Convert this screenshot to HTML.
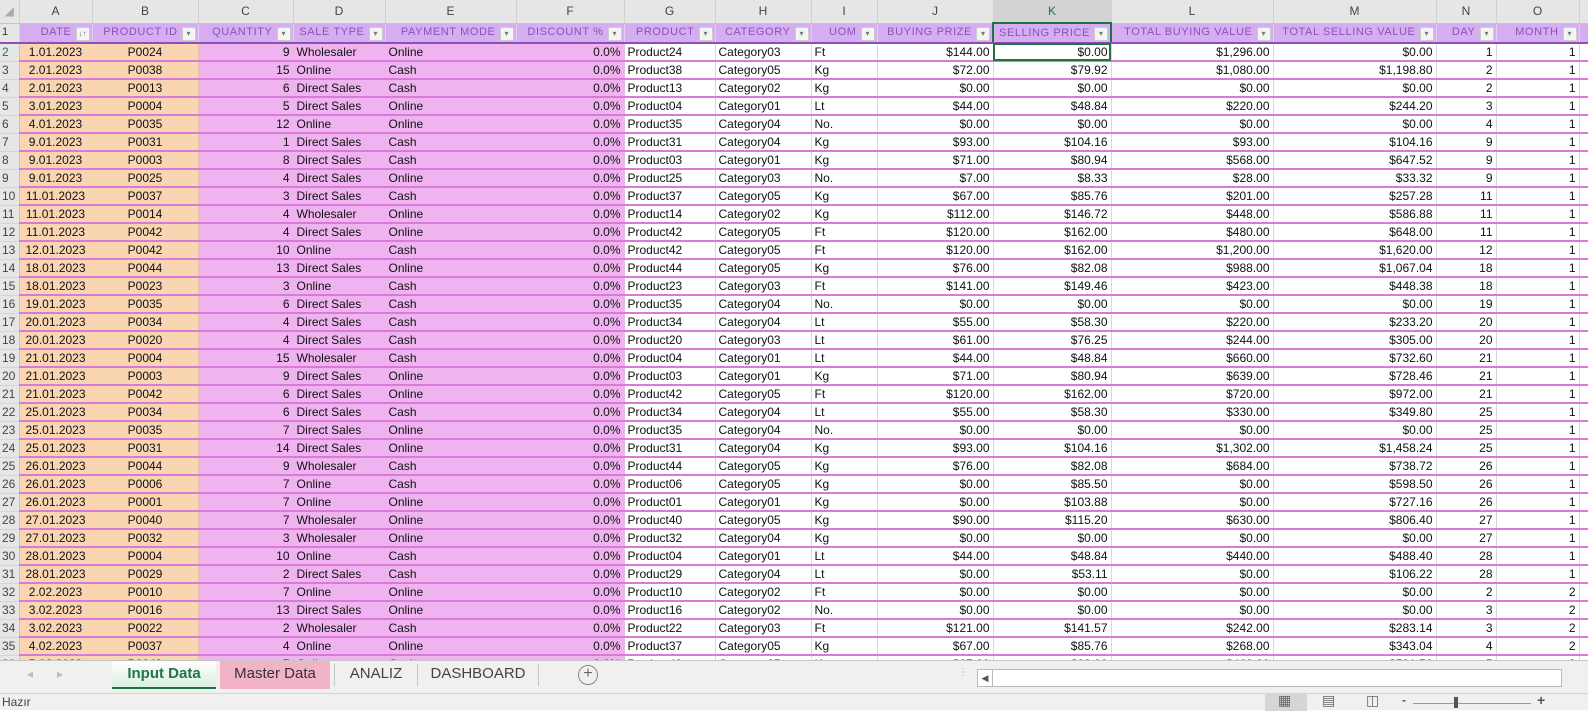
<!DOCTYPE html>
<html><head><meta charset="utf-8"><style>
*{margin:0;padding:0;box-sizing:border-box}
body{width:1588px;height:710px;overflow:hidden;background:#fff;font-family:"Liberation Sans",sans-serif;font-size:12px;color:#111;position:relative}
#wrap{position:absolute;left:0;top:0;width:1800px;height:660px;overflow:hidden}
table{border-collapse:collapse;table-layout:fixed;width:1680px;min-width:1680px}
td{white-space:nowrap;overflow:hidden;padding:0 3px;height:18px;line-height:15px;border-bottom:2px solid #d97ad9;border-right:1px solid #d8d8d8}
tr.ch td{height:23px;background:#e6e6e6;color:#444;text-align:center;border-bottom:1px solid #c6c6c6;border-right:1px solid #cfcfcf;font-size:12px}
tr.ch td.sel{background:#d3d3d3;color:#217346;border-bottom:2px solid #217346}
tr.h td{height:20px;background:#d5aef0;color:#8d4ec2;text-align:right;border-bottom:2px solid #8e4dba;border-right:1px solid #e4cdf5;font-size:11px;letter-spacing:.6px;position:relative;padding-right:20px}
tr.h td.rh{color:#333;letter-spacing:0}
.fb{position:absolute;right:2px;top:3px;width:14px;height:14px;background:#f4f4f4;border:1px solid #ccc;color:#777;font-size:8px;line-height:12px;text-align:center;letter-spacing:0}
td.rh{background:#e6e6e6!important;color:#444;text-align:left;padding:0 2px;border-right:1px solid #c6c6c6;border-bottom:1px solid #d4d4d4;font-size:12px}
tr.d td:nth-child(2),tr.d td:nth-child(3){background:#f9d5b1;text-align:center;border-right-color:#f9d5b1}
tr.d td:nth-child(3){border-right-color:#e8c0a0}
tr.d td:nth-child(4),tr.d td:nth-child(5),tr.d td:nth-child(6),tr.d td:nth-child(7){background:#efb3ef;border-right-color:#efb3ef}
tr.d td:nth-child(4),tr.d td:nth-child(7){text-align:right}
tr.d td:nth-child(n+11){text-align:right}
tr.d td:nth-child(7){border-right-color:#e0c0e0}
.cur{outline:2px solid #217346;outline-offset:-2px}
#tabs{position:absolute;left:0;top:660px;width:1588px;height:33px;background:#f0f0f0;border-top:1px solid #c6c6c6;font-size:15px;color:#444}
#tabs div{position:absolute;top:0;height:28px;line-height:26px;text-align:center}
#status{position:absolute;left:0;top:693px;width:1588px;height:17px;background:#f0f0f0;border-top:1px solid #d4d4d4;font-size:12px;color:#444}
</style></head><body>
<div id="wrap">
<table>
<colgroup><col style="width:19px"><col style="width:73px"><col style="width:106px"><col style="width:95px"><col style="width:92px"><col style="width:131px"><col style="width:108px"><col style="width:91px"><col style="width:96px"><col style="width:66px"><col style="width:116px"><col style="width:118px"><col style="width:162px"><col style="width:163px"><col style="width:60px"><col style="width:83px"><col style="width:101px"></colgroup>
<tr class="ch"><td class="rh" style="color:#aaa">◢</td><td>A</td><td>B</td><td>C</td><td>D</td><td>E</td><td>F</td><td>G</td><td>H</td><td>I</td><td>J</td><td class="sel">K</td><td>L</td><td>M</td><td>N</td><td>O</td><td></td></tr>
<tr class="h"><td class="rh">1</td><td>DATE<span class="fb">↓↑</span></td><td>PRODUCT ID<span class="fb">▾</span></td><td>QUANTITY<span class="fb">▾</span></td><td>SALE TYPE<span class="fb">▾</span></td><td>PAYMENT MODE<span class="fb">▾</span></td><td>DISCOUNT %<span class="fb">▾</span></td><td>PRODUCT<span class="fb">▾</span></td><td>CATEGORY<span class="fb">▾</span></td><td>UOM<span class="fb">▾</span></td><td>BUYING PRIZE<span class="fb">▾</span></td><td style="border:2px solid #217346;border-bottom:2px solid #8e4dba">SELLING PRICE<span class="fb">▾</span></td><td>TOTAL BUYING VALUE<span class="fb">▾</span></td><td>TOTAL SELLING VALUE<span class="fb">▾</span></td><td>DAY<span class="fb">▾</span></td><td>MONTH<span class="fb">▾</span></td><td></td></tr>
<tr class="d"><td class="rh" style="color:#217346">2</td><td>1.01.2023</td><td>P0024</td><td>9</td><td>Wholesaler</td><td>Online</td><td>0.0%</td><td>Product24</td><td>Category03</td><td>Ft</td><td>$144.00</td><td class="cur">$0.00</td><td>$1,296.00</td><td>$0.00</td><td>1</td><td>1</td><td></td></tr>
<tr class="d"><td class="rh">3</td><td>2.01.2023</td><td>P0038</td><td>15</td><td>Online</td><td>Cash</td><td>0.0%</td><td>Product38</td><td>Category05</td><td>Kg</td><td>$72.00</td><td>$79.92</td><td>$1,080.00</td><td>$1,198.80</td><td>2</td><td>1</td><td></td></tr>
<tr class="d"><td class="rh">4</td><td>2.01.2023</td><td>P0013</td><td>6</td><td>Direct Sales</td><td>Cash</td><td>0.0%</td><td>Product13</td><td>Category02</td><td>Kg</td><td>$0.00</td><td>$0.00</td><td>$0.00</td><td>$0.00</td><td>2</td><td>1</td><td></td></tr>
<tr class="d"><td class="rh">5</td><td>3.01.2023</td><td>P0004</td><td>5</td><td>Direct Sales</td><td>Online</td><td>0.0%</td><td>Product04</td><td>Category01</td><td>Lt</td><td>$44.00</td><td>$48.84</td><td>$220.00</td><td>$244.20</td><td>3</td><td>1</td><td></td></tr>
<tr class="d"><td class="rh">6</td><td>4.01.2023</td><td>P0035</td><td>12</td><td>Online</td><td>Online</td><td>0.0%</td><td>Product35</td><td>Category04</td><td>No.</td><td>$0.00</td><td>$0.00</td><td>$0.00</td><td>$0.00</td><td>4</td><td>1</td><td></td></tr>
<tr class="d"><td class="rh">7</td><td>9.01.2023</td><td>P0031</td><td>1</td><td>Direct Sales</td><td>Cash</td><td>0.0%</td><td>Product31</td><td>Category04</td><td>Kg</td><td>$93.00</td><td>$104.16</td><td>$93.00</td><td>$104.16</td><td>9</td><td>1</td><td></td></tr>
<tr class="d"><td class="rh">8</td><td>9.01.2023</td><td>P0003</td><td>8</td><td>Direct Sales</td><td>Cash</td><td>0.0%</td><td>Product03</td><td>Category01</td><td>Kg</td><td>$71.00</td><td>$80.94</td><td>$568.00</td><td>$647.52</td><td>9</td><td>1</td><td></td></tr>
<tr class="d"><td class="rh">9</td><td>9.01.2023</td><td>P0025</td><td>4</td><td>Direct Sales</td><td>Online</td><td>0.0%</td><td>Product25</td><td>Category03</td><td>No.</td><td>$7.00</td><td>$8.33</td><td>$28.00</td><td>$33.32</td><td>9</td><td>1</td><td></td></tr>
<tr class="d"><td class="rh">10</td><td>11.01.2023</td><td>P0037</td><td>3</td><td>Direct Sales</td><td>Cash</td><td>0.0%</td><td>Product37</td><td>Category05</td><td>Kg</td><td>$67.00</td><td>$85.76</td><td>$201.00</td><td>$257.28</td><td>11</td><td>1</td><td></td></tr>
<tr class="d"><td class="rh">11</td><td>11.01.2023</td><td>P0014</td><td>4</td><td>Wholesaler</td><td>Online</td><td>0.0%</td><td>Product14</td><td>Category02</td><td>Kg</td><td>$112.00</td><td>$146.72</td><td>$448.00</td><td>$586.88</td><td>11</td><td>1</td><td></td></tr>
<tr class="d"><td class="rh">12</td><td>11.01.2023</td><td>P0042</td><td>4</td><td>Direct Sales</td><td>Online</td><td>0.0%</td><td>Product42</td><td>Category05</td><td>Ft</td><td>$120.00</td><td>$162.00</td><td>$480.00</td><td>$648.00</td><td>11</td><td>1</td><td></td></tr>
<tr class="d"><td class="rh">13</td><td>12.01.2023</td><td>P0042</td><td>10</td><td>Online</td><td>Cash</td><td>0.0%</td><td>Product42</td><td>Category05</td><td>Ft</td><td>$120.00</td><td>$162.00</td><td>$1,200.00</td><td>$1,620.00</td><td>12</td><td>1</td><td></td></tr>
<tr class="d"><td class="rh">14</td><td>18.01.2023</td><td>P0044</td><td>13</td><td>Direct Sales</td><td>Online</td><td>0.0%</td><td>Product44</td><td>Category05</td><td>Kg</td><td>$76.00</td><td>$82.08</td><td>$988.00</td><td>$1,067.04</td><td>18</td><td>1</td><td></td></tr>
<tr class="d"><td class="rh">15</td><td>18.01.2023</td><td>P0023</td><td>3</td><td>Online</td><td>Cash</td><td>0.0%</td><td>Product23</td><td>Category03</td><td>Ft</td><td>$141.00</td><td>$149.46</td><td>$423.00</td><td>$448.38</td><td>18</td><td>1</td><td></td></tr>
<tr class="d"><td class="rh">16</td><td>19.01.2023</td><td>P0035</td><td>6</td><td>Direct Sales</td><td>Cash</td><td>0.0%</td><td>Product35</td><td>Category04</td><td>No.</td><td>$0.00</td><td>$0.00</td><td>$0.00</td><td>$0.00</td><td>19</td><td>1</td><td></td></tr>
<tr class="d"><td class="rh">17</td><td>20.01.2023</td><td>P0034</td><td>4</td><td>Direct Sales</td><td>Cash</td><td>0.0%</td><td>Product34</td><td>Category04</td><td>Lt</td><td>$55.00</td><td>$58.30</td><td>$220.00</td><td>$233.20</td><td>20</td><td>1</td><td></td></tr>
<tr class="d"><td class="rh">18</td><td>20.01.2023</td><td>P0020</td><td>4</td><td>Direct Sales</td><td>Cash</td><td>0.0%</td><td>Product20</td><td>Category03</td><td>Lt</td><td>$61.00</td><td>$76.25</td><td>$244.00</td><td>$305.00</td><td>20</td><td>1</td><td></td></tr>
<tr class="d"><td class="rh">19</td><td>21.01.2023</td><td>P0004</td><td>15</td><td>Wholesaler</td><td>Cash</td><td>0.0%</td><td>Product04</td><td>Category01</td><td>Lt</td><td>$44.00</td><td>$48.84</td><td>$660.00</td><td>$732.60</td><td>21</td><td>1</td><td></td></tr>
<tr class="d"><td class="rh">20</td><td>21.01.2023</td><td>P0003</td><td>9</td><td>Direct Sales</td><td>Online</td><td>0.0%</td><td>Product03</td><td>Category01</td><td>Kg</td><td>$71.00</td><td>$80.94</td><td>$639.00</td><td>$728.46</td><td>21</td><td>1</td><td></td></tr>
<tr class="d"><td class="rh">21</td><td>21.01.2023</td><td>P0042</td><td>6</td><td>Direct Sales</td><td>Online</td><td>0.0%</td><td>Product42</td><td>Category05</td><td>Ft</td><td>$120.00</td><td>$162.00</td><td>$720.00</td><td>$972.00</td><td>21</td><td>1</td><td></td></tr>
<tr class="d"><td class="rh">22</td><td>25.01.2023</td><td>P0034</td><td>6</td><td>Direct Sales</td><td>Cash</td><td>0.0%</td><td>Product34</td><td>Category04</td><td>Lt</td><td>$55.00</td><td>$58.30</td><td>$330.00</td><td>$349.80</td><td>25</td><td>1</td><td></td></tr>
<tr class="d"><td class="rh">23</td><td>25.01.2023</td><td>P0035</td><td>7</td><td>Direct Sales</td><td>Online</td><td>0.0%</td><td>Product35</td><td>Category04</td><td>No.</td><td>$0.00</td><td>$0.00</td><td>$0.00</td><td>$0.00</td><td>25</td><td>1</td><td></td></tr>
<tr class="d"><td class="rh">24</td><td>25.01.2023</td><td>P0031</td><td>14</td><td>Direct Sales</td><td>Online</td><td>0.0%</td><td>Product31</td><td>Category04</td><td>Kg</td><td>$93.00</td><td>$104.16</td><td>$1,302.00</td><td>$1,458.24</td><td>25</td><td>1</td><td></td></tr>
<tr class="d"><td class="rh">25</td><td>26.01.2023</td><td>P0044</td><td>9</td><td>Wholesaler</td><td>Cash</td><td>0.0%</td><td>Product44</td><td>Category05</td><td>Kg</td><td>$76.00</td><td>$82.08</td><td>$684.00</td><td>$738.72</td><td>26</td><td>1</td><td></td></tr>
<tr class="d"><td class="rh">26</td><td>26.01.2023</td><td>P0006</td><td>7</td><td>Online</td><td>Cash</td><td>0.0%</td><td>Product06</td><td>Category05</td><td>Kg</td><td>$0.00</td><td>$85.50</td><td>$0.00</td><td>$598.50</td><td>26</td><td>1</td><td></td></tr>
<tr class="d"><td class="rh">27</td><td>26.01.2023</td><td>P0001</td><td>7</td><td>Online</td><td>Online</td><td>0.0%</td><td>Product01</td><td>Category01</td><td>Kg</td><td>$0.00</td><td>$103.88</td><td>$0.00</td><td>$727.16</td><td>26</td><td>1</td><td></td></tr>
<tr class="d"><td class="rh">28</td><td>27.01.2023</td><td>P0040</td><td>7</td><td>Wholesaler</td><td>Online</td><td>0.0%</td><td>Product40</td><td>Category05</td><td>Kg</td><td>$90.00</td><td>$115.20</td><td>$630.00</td><td>$806.40</td><td>27</td><td>1</td><td></td></tr>
<tr class="d"><td class="rh">29</td><td>27.01.2023</td><td>P0032</td><td>3</td><td>Wholesaler</td><td>Online</td><td>0.0%</td><td>Product32</td><td>Category04</td><td>Kg</td><td>$0.00</td><td>$0.00</td><td>$0.00</td><td>$0.00</td><td>27</td><td>1</td><td></td></tr>
<tr class="d"><td class="rh">30</td><td>28.01.2023</td><td>P0004</td><td>10</td><td>Online</td><td>Cash</td><td>0.0%</td><td>Product04</td><td>Category01</td><td>Lt</td><td>$44.00</td><td>$48.84</td><td>$440.00</td><td>$488.40</td><td>28</td><td>1</td><td></td></tr>
<tr class="d"><td class="rh">31</td><td>28.01.2023</td><td>P0029</td><td>2</td><td>Direct Sales</td><td>Cash</td><td>0.0%</td><td>Product29</td><td>Category04</td><td>Lt</td><td>$0.00</td><td>$53.11</td><td>$0.00</td><td>$106.22</td><td>28</td><td>1</td><td></td></tr>
<tr class="d"><td class="rh">32</td><td>2.02.2023</td><td>P0010</td><td>7</td><td>Online</td><td>Online</td><td>0.0%</td><td>Product10</td><td>Category02</td><td>Ft</td><td>$0.00</td><td>$0.00</td><td>$0.00</td><td>$0.00</td><td>2</td><td>2</td><td></td></tr>
<tr class="d"><td class="rh">33</td><td>3.02.2023</td><td>P0016</td><td>13</td><td>Direct Sales</td><td>Online</td><td>0.0%</td><td>Product16</td><td>Category02</td><td>No.</td><td>$0.00</td><td>$0.00</td><td>$0.00</td><td>$0.00</td><td>3</td><td>2</td><td></td></tr>
<tr class="d"><td class="rh">34</td><td>3.02.2023</td><td>P0022</td><td>2</td><td>Wholesaler</td><td>Cash</td><td>0.0%</td><td>Product22</td><td>Category03</td><td>Ft</td><td>$121.00</td><td>$141.57</td><td>$242.00</td><td>$283.14</td><td>3</td><td>2</td><td></td></tr>
<tr class="d"><td class="rh">35</td><td>4.02.2023</td><td>P0037</td><td>4</td><td>Online</td><td>Online</td><td>0.0%</td><td>Product37</td><td>Category05</td><td>Kg</td><td>$67.00</td><td>$85.76</td><td>$268.00</td><td>$343.04</td><td>4</td><td>2</td><td></td></tr>
<tr class="d"><td class="rh">36</td><td>5.02.2023</td><td>P0043</td><td>7</td><td>Online</td><td>Cash</td><td>0.0%</td><td>Product43</td><td>Category05</td><td>Kg</td><td>$67.00</td><td>$83.00</td><td>$469.00</td><td>$581.56</td><td>5</td><td>2</td><td></td></tr>
</table>
</div>
<div id="tabs">
<div style="left:20px;width:20px;color:#bbb;font-size:12px">◂</div>
<div style="left:50px;width:20px;color:#bbb;font-size:12px">▸</div>
<div style="left:112px;width:104px;background:linear-gradient(#ffffff,#d9f0df);border-bottom:2px solid #217346;color:#217346;font-weight:bold">Input Data</div>
<div style="left:220px;width:110px;background:#f2b3c6;color:#333">Master Data</div>
<div style="left:334px;width:1px;height:22px;top:3px;background:#c6c6c6"></div>
<div style="left:336px;width:80px">ANALIZ</div>
<div style="left:417px;width:1px;height:22px;top:3px;background:#c6c6c6"></div>
<div style="left:420px;width:116px">DASHBOARD</div>
<div style="left:538px;width:1px;height:22px;top:3px;background:#c6c6c6"></div>
<div style="left:578px;top:4px;width:20px;height:20px;line-height:16px;border:1px solid #888;border-radius:50%;color:#666;font-size:16px">+</div>
<div style="left:958px;width:6px;color:#aaa;font-size:10px;line-height:8px;top:8px">⋮</div>
<div style="left:977px;top:8px;width:585px;height:18px;background:#fff;border:1px solid #bbb"></div>
<div style="left:977px;top:8px;width:16px;height:18px;border:1px solid #bbb;background:#fff;font-size:9px;line-height:16px;color:#555">◀</div>
</div>
<div id="status">
<span style="position:absolute;left:2px;top:1px">Hazır</span>
<div style="position:absolute;left:1265px;top:0;width:42px;height:17px;background:#d6d6d6"></div>
<span style="position:absolute;left:1278px;top:-2px;color:#666;font-size:14px">▦</span>
<span style="position:absolute;left:1322px;top:-2px;color:#666;font-size:14px">▤</span>
<span style="position:absolute;left:1366px;top:-2px;color:#666;font-size:14px">◫</span>
<span style="position:absolute;left:1402px;top:-1px;color:#555;font-weight:bold">-</span>
<div style="position:absolute;left:1413px;top:9px;width:118px;height:1px;background:#999"></div>
<div style="position:absolute;left:1454px;top:3px;width:4px;height:11px;background:#555"></div>
<span style="position:absolute;left:1537px;top:-2px;color:#555;font-weight:bold;font-size:14px">+</span>
</div>
</body></html>
